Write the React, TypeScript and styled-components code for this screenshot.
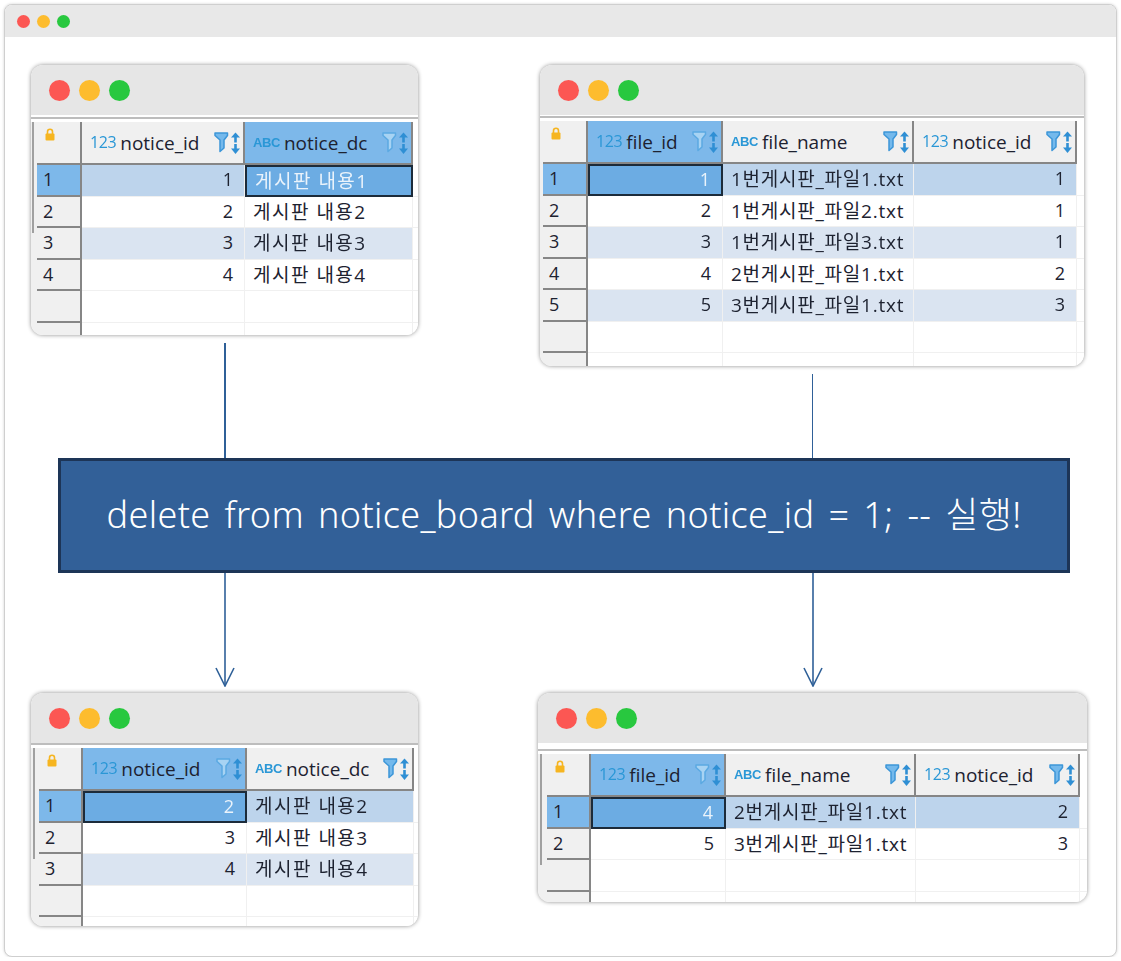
import styled, { createGlobalStyle } from "styled-components";

type TColumn = { type: "123" | "ABC"; name: string; width: number; numeric?: boolean };

type ISheet = {
  gutter: number;
  head: number;
  ruleGap: number;
  spacing: number;
  scrollbar: boolean;
  columns: TColumn[];
  rows: string[][];
  activeColumn: number;
  activeCell: number;
};

const noticeColumns = (first: number, second: number): TColumn[] => [
  { type: "123", name: "notice_id", width: first, numeric: true },
  { type: "ABC", name: "notice_dc", width: second },
];

const fileColumns = (first: number, second: number, third: number): TColumn[] => [
  { type: "123", name: "file_id", width: first, numeric: true },
  { type: "ABC", name: "file_name", width: second },
  { type: "123", name: "notice_id", width: third, numeric: true },
];

const beforeNotice: ISheet = {
  gutter: 6,
  head: 45,
  ruleGap: 2,
  spacing: 1.5,
  scrollbar: true,
  columns: noticeColumns(163, 168),
  rows: [
    ["1", "게시판 내용1"],
    ["2", "게시판 내용2"],
    ["3", "게시판 내용3"],
    ["4", "게시판 내용4"],
  ],
  activeColumn: 1,
  activeCell: 1,
};

const beforeFile: ISheet = {
  gutter: 3,
  head: 45,
  ruleGap: 1,
  spacing: 0.75,
  scrollbar: false,
  columns: fileColumns(135, 191, 163),
  rows: [
    ["1", "1번게시판_파일1.txt", "1"],
    ["2", "1번게시판_파일2.txt", "1"],
    ["3", "1번게시판_파일3.txt", "1"],
    ["4", "2번게시판_파일1.txt", "2"],
    ["5", "3번게시판_파일1.txt", "3"],
  ],
  activeColumn: 0,
  activeCell: 0,
};

const afterNotice: ISheet = {
  gutter: 8,
  head: 44,
  ruleGap: 0,
  spacing: 1.5,
  scrollbar: true,
  columns: noticeColumns(164, 167),
  rows: [
    ["2", "게시판 내용2"],
    ["3", "게시판 내용3"],
    ["4", "게시판 내용4"],
  ],
  activeColumn: 0,
  activeCell: 0,
};

const afterFile: ISheet = {
  gutter: 9,
  head: 44,
  ruleGap: 6,
  spacing: 0.75,
  scrollbar: true,
  columns: fileColumns(135, 190, 164),
  rows: [
    ["4", "2번게시판_파일1.txt", "2"],
    ["5", "3번게시판_파일1.txt", "3"],
  ],
  activeColumn: 0,
  activeCell: 0,
};

function FilterSortIcon({ active }: { active: boolean }) {
  return (
    <svg width="26" height="24" viewBox="0 0 26 24">
      <path
        d="M1 2H13.5V4.5L10 9V17L6 20.5V9L1 4.5Z"
        fill={active ? "#a7d3f3" : "#74b9ec"}
        stroke={active ? "#5ba9e2" : "#3c96d8"}
        strokeWidth="1.5"
        strokeLinejoin="round"
      />
      <path d="M21.5 6V11.5" stroke="#2f8fd4" strokeWidth="2.6" />
      <path d="M17 6.5L21.5 1.5L26 6.5Z" fill="#2f8fd4" />
      <path d="M21.5 13V18" stroke="#2f8fd4" strokeWidth="2.6" />
      <path d="M17 17.5L21.5 23L26 17.5Z" fill="#2f8fd4" />
    </svg>
  );
}

function LockIcon() {
  return (
    <svg width="10" height="13" viewBox="0 0 10 13">
      <path d="M2.5 6V3.8a2.5 2.5 0 0 1 5 0V6" fill="none" stroke="#f6b520" strokeWidth="1.6" />
      <rect x="0.5" y="5.5" width="9" height="7" rx="1" fill="#f6b520" />
    </svg>
  );
}

function ArrowDown() {
  return (
    <svg width="20" height="114" viewBox="0 0 20 114">
      <path d="M10 0V113" stroke="#2f6098" strokeWidth="1.6" fill="none" />
      <path d="M1 95L10 113L19 95" stroke="#2f6098" strokeWidth="1.6" fill="none" />
    </svg>
  );
}

function Sheet({ sheet }: { sheet: ISheet }) {
  const template = [
    `${sheet.gutter}px`,
    `${sheet.head}px`,
    ...sheet.columns.map((column) => `${column.width}px`),
    "1fr",
  ].join(" ");

  return (
    <SheetBody>
      {sheet.scrollbar && <Scrollbar $left={sheet.gutter > 6 ? 2 : 1} />}

      <HeaderRow $template={template}>
        <Gutter />
        <CornerCell>
          <LockIcon />
        </CornerCell>
        {sheet.columns.map((column, index) => (
          <HeaderCell key={column.name} $active={index === sheet.activeColumn}>
            <TypeLabel $type={column.type}>{column.type}</TypeLabel>
            <ColumnName>{column.name}</ColumnName>
            <FilterSlot>
              <FilterSortIcon active={index === sheet.activeColumn} />
            </FilterSlot>
          </HeaderCell>
        ))}
        <Trailing />
      </HeaderRow>

      {sheet.rows.map((row, rowIndex) => (
        <Row key={rowIndex} $template={template}>
          <Gutter />
          <RowHead $selected={rowIndex === 0}>{rowIndex + 1}</RowHead>
          {row.map((value, cellIndex) => (
            <Cell
              key={cellIndex}
              $numeric={sheet.columns[cellIndex].numeric}
              $spacing={sheet.spacing}
              $tone={rowIndex === 0 ? "selected" : rowIndex % 2 === 0 ? "stripe" : "plain"}
              $active={rowIndex === 0 && cellIndex === sheet.activeCell}
            >
              {value}
            </Cell>
          ))}
          <TrailingCell />
        </Row>
      ))}

      {[0, 1].map((blank) => (
        <Row key={blank} $template={template}>
          <Gutter />
          <RowHead />
          {sheet.columns.map((column) => (
            <Cell key={column.name} $tone="plain" $spacing={0} />
          ))}
          <TrailingCell />
        </Row>
      ))}
    </SheetBody>
  );
}

function TableWindow({ sheet, height }: { sheet: ISheet; height: number }) {
  return (
    <Window $height={height}>
      <TitleBar>
        <WindowDot $color="#fc5753" />
        <WindowDot $color="#fdbc2e" />
        <WindowDot $color="#28c83f" />
      </TitleBar>
      <Rule $gap={sheet.ruleGap} />
      <Sheet sheet={sheet} />
    </Window>
  );
}

export default function App() {
  return (
    <Frame>
      <GlobalStyle />
      <FrameBar>
        <FrameDot $color="#fc5753" />
        <FrameDot $color="#fdbc2e" />
        <FrameDot $color="#28c83f" />
      </FrameBar>

      <Canvas>
        <TopRow>
          <Column>
            <TableWindow sheet={beforeNotice} height={270} />
            <Stem />
          </Column>
          <Column>
            <TableWindow sheet={beforeFile} height={301} />
            <Stem />
          </Column>
        </TopRow>

        <Banner>delete from notice_board where notice_id = 1; -- 실행!</Banner>

        <BottomRow>
          <Column>
            <ArrowSlot>
              <ArrowDown />
            </ArrowSlot>
            <TableWindow sheet={afterNotice} height={233} />
          </Column>
          <Column>
            <ArrowSlot>
              <ArrowDown />
            </ArrowSlot>
            <TableWindow sheet={afterFile} height={209} />
          </Column>
        </BottomRow>
      </Canvas>
    </Frame>
  );
}

const GlobalStyle = createGlobalStyle`
  html, body {
    margin: 0;
    background: #fff;
  }

  * {
    box-sizing: border-box;
  }
`;

const Frame = styled.div`
  width: 1113px;
  height: 953px;
  margin: 4px 0 0 4px;

  border: 1px solid #cfcfcf;
  border-radius: 8px;
  box-shadow: 0 0 3px rgba(0, 0, 0, 0.18);
  overflow: hidden;
  background: #fff;
`;

const FrameBar = styled.div`
  display: flex;
  align-items: center;
  gap: 7px;
  height: 32px;
  padding-left: 12px;

  background: #e8e8e8;
`;

const FrameDot = styled.span<{ $color: string }>`
  width: 13px;
  height: 13px;
  border-radius: 50%;
  background: ${(props) => props.$color};
`;

const Canvas = styled.div`
  display: flex;
  flex-direction: column;
  padding: 28px 0 0 26px;
`;

const TopRow = styled.div`
  display: grid;
  grid-template-columns: 387px 544px;
  column-gap: 122px;
  height: 393px;
`;

const BottomRow = styled.div`
  display: grid;
  grid-template-columns: 387px 549px;
  column-gap: 120px;
`;

const Column = styled.div`
  display: flex;
  flex-direction: column;
  align-items: center;
`;

const Stem = styled.div`
  flex: 1;
  width: 1.6px;
  margin: 8px 0 0 1px;

  background: #2f6098;
`;

const ArrowSlot = styled.div`
  display: flex;
  height: 120px;
`;

const Banner = styled.div`
  display: flex;
  align-items: center;
  justify-content: center;
  width: 1012px;
  height: 115px;
  margin-left: 27px;
  padding-bottom: 6px;

  border: 3px solid #1d3557;
  background: #326098;
  color: #fff;

  font-family: "Noto Sans", "Noto Sans CJK KR", sans-serif;
  font-size: 36px;
  font-weight: 300;
  letter-spacing: 0.36px;
  word-spacing: 4.3px;
`;

const Window = styled.div<{ $height: number }>`
  display: flex;
  flex-direction: column;
  width: 100%;
  height: ${(props) => props.$height}px;

  border-radius: 12px;
  box-shadow: 0 0 4px rgba(0, 0, 0, 0.45);
  overflow: hidden;
  background: #fff;

  font-family: "Open Sans", "Noto Sans CJK KR", sans-serif;
  color: #1d2230;
  filter: blur(0.3px);
`;

const TitleBar = styled.div`
  display: flex;
  align-items: center;
  gap: 9px;
  flex: none;
  height: 50px;
  padding-left: 18px;

  background: #e6e6e6;
`;

const WindowDot = styled.span<{ $color: string }>`
  width: 21px;
  height: 21px;
  border-radius: 50%;
  background: ${(props) => props.$color};
`;

const Rule = styled.div<{ $gap: number }>`
  flex: none;
  height: ${(props) => props.$gap + 2}px;
  margin-bottom: 3px;

  border-bottom: 2px solid #bdbdbd;
`;

const SheetBody = styled.div`
  position: relative;
  flex: 1;
  min-height: 0;
`;

const Scrollbar = styled.span<{ $left: number }>`
  position: absolute;
  top: 0;
  left: ${(props) => props.$left}px;
  width: 2px;
  height: 111px;

  background: #a0a0a0;
`;

const HeaderRow = styled.div<{ $template: string }>`
  display: grid;
  grid-template-columns: ${(props) => props.$template};
  height: 43px;
`;

const Row = styled.div<{ $template: string }>`
  display: grid;
  grid-template-columns: ${(props) => props.$template};
  height: 31.5px;
`;

const Gutter = styled.div`
  background: #f0f0f0;
`;

const CornerCell = styled.div`
  display: flex;
  align-items: flex-start;
  padding: 6px 0 0 8px;

  border-right: 2px solid #868686;
  border-bottom: 2px solid #868686;
  background: #f0f0f0;
`;

const HeaderCell = styled.div<{ $active: boolean }>`
  display: flex;
  align-items: center;
  padding: 1px 3px 0 8px;

  border-right: 2px solid #868686;
  border-bottom: 2px solid #868686;
  background: ${(props) => (props.$active ? "#7db8ea" : "#f0f0f0")};
`;

const TypeLabel = styled.span<{ $type: string }>`
  position: relative;
  top: -1px;
  margin-right: 4px;

  color: #2a97d6;
  font-family: ${(props) =>
    props.$type === "ABC" ? '"Liberation Sans", sans-serif' : '"Open Sans", sans-serif'};
  font-size: ${(props) => (props.$type === "ABC" ? "13px" : "16px")};
  font-weight: ${(props) => (props.$type === "ABC" ? 700 : 400)};
  letter-spacing: -0.4px;
`;

const ColumnName = styled.span`
  font-size: 19px;
  white-space: nowrap;
`;

const FilterSlot = styled.span`
  display: flex;
  margin-left: auto;
`;

const Trailing = styled.div`
  background: #fff;
`;

const TrailingCell = styled.div`
  border-bottom: 1px solid #f0f0f0;
  background: #fff;
`;

const RowHead = styled.div<{ $selected?: boolean }>`
  display: flex;
  align-items: center;
  padding: 0 0 1px 6px;

  border-right: 2px solid #868686;
  border-bottom: 2px solid #868686;
  background: ${(props) => (props.$selected ? "#7db8ea" : "#f0f0f0")};

  font-size: 18px;
`;

const toneColors = {
  plain: "#fff",
  stripe: "#dae4f1",
  selected: "#bdd4ec",
};

const Cell = styled.div<{
  $numeric?: boolean;
  $spacing: number;
  $tone: keyof typeof toneColors;
  $active?: boolean;
}>`
  display: flex;
  align-items: center;
  justify-content: ${(props) => (props.$numeric ? "flex-end" : "flex-start")};
  padding: ${(props) => (props.$numeric ? "0 11px 2px 0" : "0 0 2px 8px")};

  border-right: 1px solid #f0f0f0;
  border-bottom: 1px solid #f0f0f0;
  background: ${(props) => (props.$active ? "#6cace3" : toneColors[props.$tone])};
  color: ${(props) => (props.$active ? "#eaf3fb" : "#1d2230")};
  ${(props) => (props.$active ? "border: 2px solid #1c2b3a;" : "")}

  font-size: ${(props) => (props.$numeric ? "18px" : "19px")};
  letter-spacing: ${(props) => (props.$numeric ? 0 : props.$spacing)}px;
  white-space: nowrap;
  overflow: hidden;
`;
